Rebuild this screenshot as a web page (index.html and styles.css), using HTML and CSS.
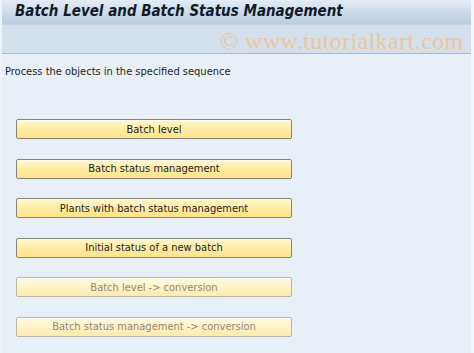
FILE: index.html
```html
<!DOCTYPE html>
<html>
    <head>
        <meta charset="utf-8">
        <title>Batch Level and Batch Status Management</title>
        <link rel="stylesheet" href="styles.css">
    </head>
    <body>
        <div class="screen">
            <div class="title-bar">
                <h1 class="title">Batch Level and Batch Status Management</h1>
            </div>
            <div class="tool-bar">
                <span class="watermark">© www.tutorialkart.com</span>
            </div>
            <div class="contents">
                <p class="hint">Process the objects in the specified sequence</p>
                <div class="btn-list">
                    <button class="btn">Batch level</button>
                    <button class="btn">Batch status management</button>
                    <button class="btn">Plants with batch status management</button>
                    <button class="btn">Initial status of a new batch</button>
                    <button class="btn" disabled>Batch level -&gt; conversion</button>
                    <button class="btn" disabled>Batch status management -&gt; conversion</button>
                </div>
            </div>
        </div>
    </body>
</html>
```

FILE: styles.css
```css
body {
    margin: 0;
    background-color: #e9eff7;
    font-family: "DejaVu Sans Condensed", "DejaVu Sans", sans-serif;
}
.screen {
    width: 474px;
    height: 353px;
    overflow: hidden;
    position: relative;
    border-left: 2px solid #eef3f8;
    border-right: 3px solid #f4f7fb;
    box-sizing: border-box;
}
.title-bar {
    height: 24px;
    background: linear-gradient(#e4ecf5, #c9d8e8 60%, #b9cde1);
}
.title {
    margin: 0;
    padding-left: 13px;
    font-size: 15px;
    line-height: 22px;
    font-weight: bold;
    font-style: italic;
    color: #121a2a;
}
.tool-bar {
    position: relative;
    height: 28px;
    background-color: #d4e0ec;
    border-top: 1px solid #c4d3e3;
    border-bottom: 1px solid #a9bacb;
}
.watermark {
    position: absolute;
    left: 218px;
    top: 3px;
    font-family: "Liberation Serif", serif;
    font-size: 24px;
    letter-spacing: 0.4px;
    color: #e8c6a0;
    white-space: nowrap;
}
.contents {
    padding-top: 11px;
}
.hint {
    margin: 0 0 0 3px;
    font-size: 11px;
    color: #1e1e1e;
}
.btn-list {
    display: flex;
    flex-direction: column;
    gap: 19.6px;
    padding: 41px 0 0 14px;
}
.btn {
    width: 276px;
    height: 20px;
    padding: 0;
    border: 1px solid #86847a;
    border-radius: 2px;
    background: linear-gradient(#fff7d0, #ffeca4 50%, #ffe38a);
    font-family: "DejaVu Sans Condensed", "DejaVu Sans", sans-serif;
    font-size: 11px;
    color: #1e1e1e;
    box-shadow: inset 0 1px 0 #fffcec;
}
.btn:disabled {
    border-color: #b9b6a9;
    background: linear-gradient(#fffae4, #fff2c8 50%, #ffebb0);
    color: #938a70;
}
```
